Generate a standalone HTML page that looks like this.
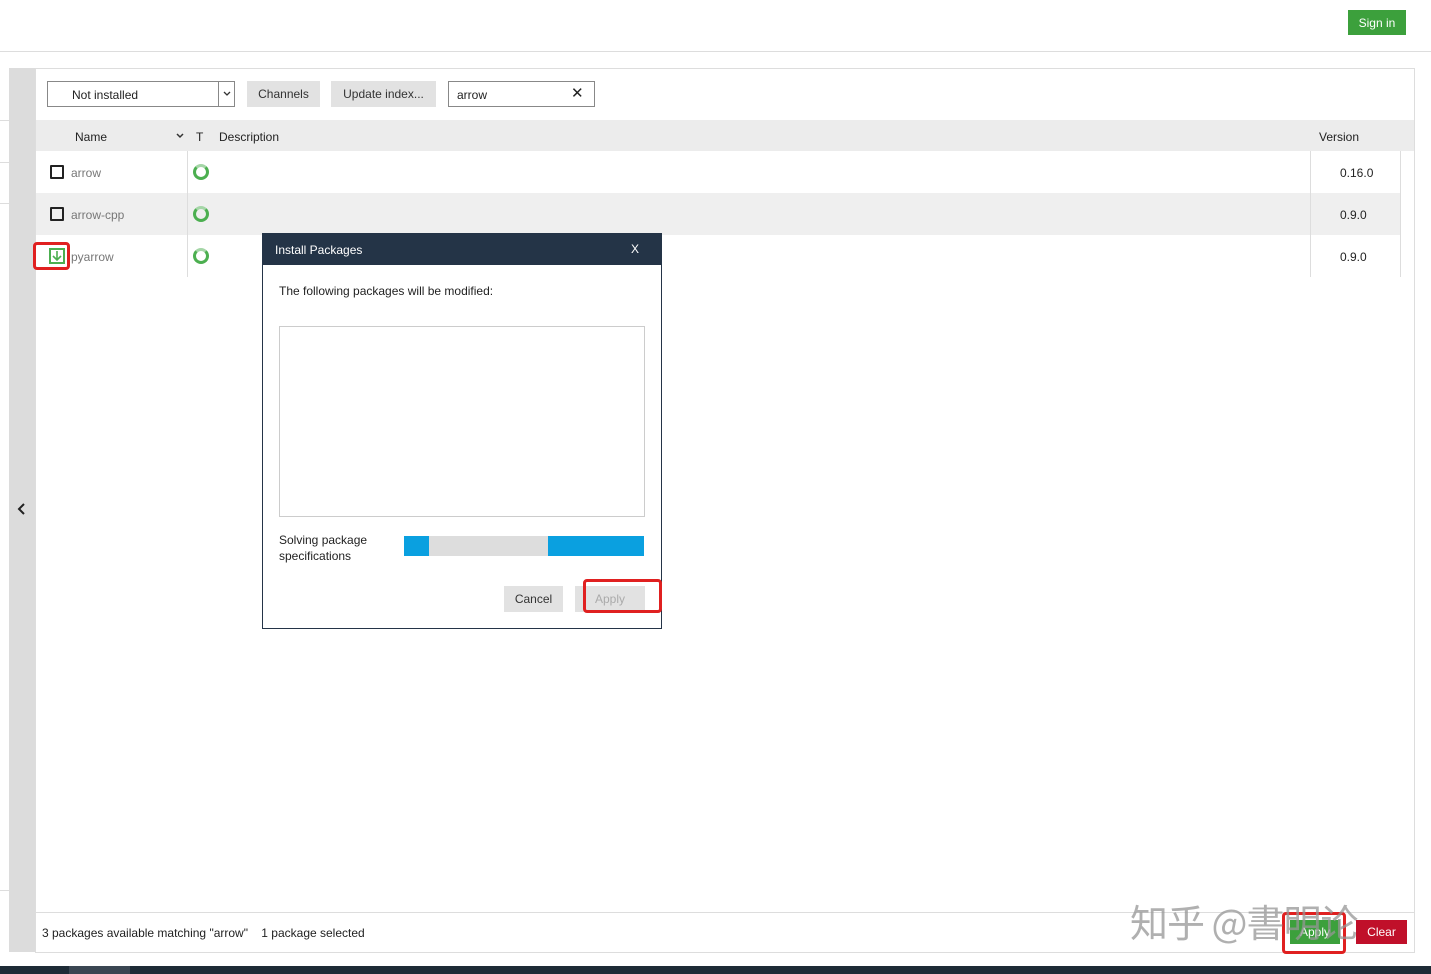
<!DOCTYPE html>
<html><head><style>
*{margin:0;padding:0;box-sizing:border-box}
body{width:1431px;height:974px;position:relative;background:#fff;font-family:"Liberation Sans","Noto Sans CJK SC",sans-serif;font-size:12px;color:#222;overflow:hidden}
.a{position:absolute}
.btn{background:#e2e2e2;display:flex;align-items:center;justify-content:center;font-size:12px;color:#333}
.cb{width:14px;height:14px;border:2px solid #222;border-radius:1px}
.ring{width:16px;height:16px;border:3px solid #4caf50;border-radius:50%;border-top-color:#a5d6a7}
</style></head><body>
<div class="a" style="left:0;top:51px;width:1431px;height:1px;background:#ddd"></div>
<div class="a btn" style="left:1348px;top:10px;width:58px;height:25px;background:#3ca03c;color:#fff">Sign in</div>
<div class="a" style="left:0;top:120px;width:9px;height:1px;background:#ddd"></div>
<div class="a" style="left:0;top:162px;width:9px;height:1px;background:#ddd"></div>
<div class="a" style="left:0;top:203px;width:9px;height:1px;background:#ddd"></div>
<div class="a" style="left:0;top:890px;width:9px;height:1px;background:#ddd"></div>
<div class="a" style="left:9px;top:68px;width:26px;height:884px;background:#dcdcdc"></div>
<svg class="a" style="left:17px;top:503px" width="10" height="12"><path d="M7 1L2 6L7 11" stroke="#222" stroke-width="2" fill="none"/></svg>
<div class="a" style="left:35px;top:68px;width:1380px;height:885px;border:1px solid #ddd"></div>
<div class="a" style="left:47px;top:81px;width:188px;height:26px;border:1px solid #888;padding:6px 24px;font-size:12px">Not installed</div>
<div class="a" style="left:218px;top:82px;width:1px;height:24px;background:#888"></div>
<svg class="a" style="left:223px;top:91px" width="8" height="6"><path d="M1 1L4 4L7 1" stroke="#333" stroke-width="1.3" fill="none"/></svg>
<div class="a btn" style="left:247px;top:81px;width:73px;height:26px">Channels</div>
<div class="a btn" style="left:331px;top:81px;width:105px;height:26px">Update index...</div>
<div class="a" style="left:448px;top:81px;width:147px;height:26px;border:1px solid #888;padding:6px 8px">arrow</div>
<div class="a" style="left:571px;top:84px;font-size:15px">&#10005;</div>
<div class="a" style="left:36px;top:120px;width:1378px;height:31px;background:#ececec"></div>
<div class="a" style="left:75px;top:130px">Name</div>
<svg class="a" style="left:176px;top:133px" width="8" height="6"><path d="M1 1L4 4L7 1" stroke="#333" stroke-width="1.5" fill="none"/></svg>
<div class="a" style="left:196px;top:130px">T</div>
<div class="a" style="left:219px;top:130px">Description</div>
<div class="a" style="left:1319px;top:130px">Version</div>
<div class="a" style="left:36px;top:193px;width:1364px;height:42px;background:#efefef"></div>
<div class="a" style="left:187px;top:151px;width:1px;height:126px;background:#ddd"></div>
<div class="a" style="left:1310px;top:151px;width:1px;height:126px;background:#ddd"></div>
<div class="a" style="left:1400px;top:151px;width:1px;height:126px;background:#ddd"></div>
<div class="a cb" style="left:50px;top:165px"></div><div class="a" style="left:71px;top:166px;color:#777">arrow</div>
<div class="a cb" style="left:50px;top:207px"></div><div class="a" style="left:71px;top:208px;color:#777">arrow-cpp</div>
<div class="a" style="left:49px;top:248px;width:16px;height:16px;border:2px solid #4caf50"></div>
<svg class="a" style="left:51px;top:250px" width="12" height="12"><path d="M6 1V10M2 6L6 10L10 6" stroke="#4caf50" stroke-width="1.6" fill="none"/></svg>
<div class="a" style="left:33px;top:242px;width:37px;height:28px;border:3px solid #e02020;border-radius:4px"></div>
<div class="a" style="left:71px;top:250px;color:#777">pyarrow</div>
<div class="a ring" style="left:193px;top:164px"></div>
<div class="a ring" style="left:193px;top:206px"></div>
<div class="a ring" style="left:193px;top:248px"></div>
<div class="a" style="left:1340px;top:166px">0.16.0</div>
<div class="a" style="left:1340px;top:208px">0.9.0</div>
<div class="a" style="left:1340px;top:250px">0.9.0</div>
<div class="a" style="left:262px;top:233px;width:400px;height:396px;border:1px solid #243447;background:#fff"></div>
<div class="a" style="left:262px;top:233px;width:400px;height:32px;background:#243447;color:#fff;padding:10px 13px">Install Packages</div>
<div class="a" style="left:631px;top:242px;color:#fff">X</div>
<div class="a" style="left:279px;top:284px">The following packages will be modified:</div>
<div class="a" style="left:279px;top:326px;width:366px;height:191px;border:1px solid #ccc"></div>
<div class="a" style="left:279px;top:532px;line-height:16px">Solving package<br>specifications</div>
<div class="a" style="left:404px;top:536px;width:240px;height:20px;background:#ddd"></div>
<div class="a" style="left:404px;top:536px;width:25px;height:20px;background:#0aa0e0"></div>
<div class="a" style="left:548px;top:536px;width:96px;height:20px;background:#0aa0e0"></div>
<div class="a btn" style="left:504px;top:586px;width:59px;height:26px">Cancel</div>
<div class="a btn" style="left:575px;top:586px;width:70px;height:26px;color:#aaa">Apply</div>
<div class="a" style="left:583px;top:579px;width:79px;height:34px;border:3px solid #e02020;border-radius:4px"></div>
<div class="a" style="left:36px;top:912px;width:1378px;height:1px;background:#ddd"></div>
<div class="a" style="left:42px;top:926px">3 packages available matching "arrow"&nbsp;&nbsp;&nbsp;&nbsp;1 package selected</div>
<div class="a btn" style="left:1290px;top:920px;width:50px;height:24px;background:#3ca03c;color:#fff">Apply</div>
<div class="a btn" style="left:1356px;top:920px;width:51px;height:24px;background:#c0102a;color:#fff">Clear</div>
<div class="a" style="left:1282px;top:912px;width:64px;height:42px;border:3px solid #e02020;border-radius:4px"></div>
<div class="a" style="left:1130px;top:893px;font-size:38px;color:rgba(150,150,150,.75);font-family:'Noto Sans CJK SC',sans-serif;letter-spacing:-1px">知乎 @書明论</div>
<div class="a" style="left:0;top:966px;width:1431px;height:8px;background:#1e2b36"></div>
<div class="a" style="left:69px;top:966px;width:61px;height:8px;background:#3a4652"></div>
</body></html>
